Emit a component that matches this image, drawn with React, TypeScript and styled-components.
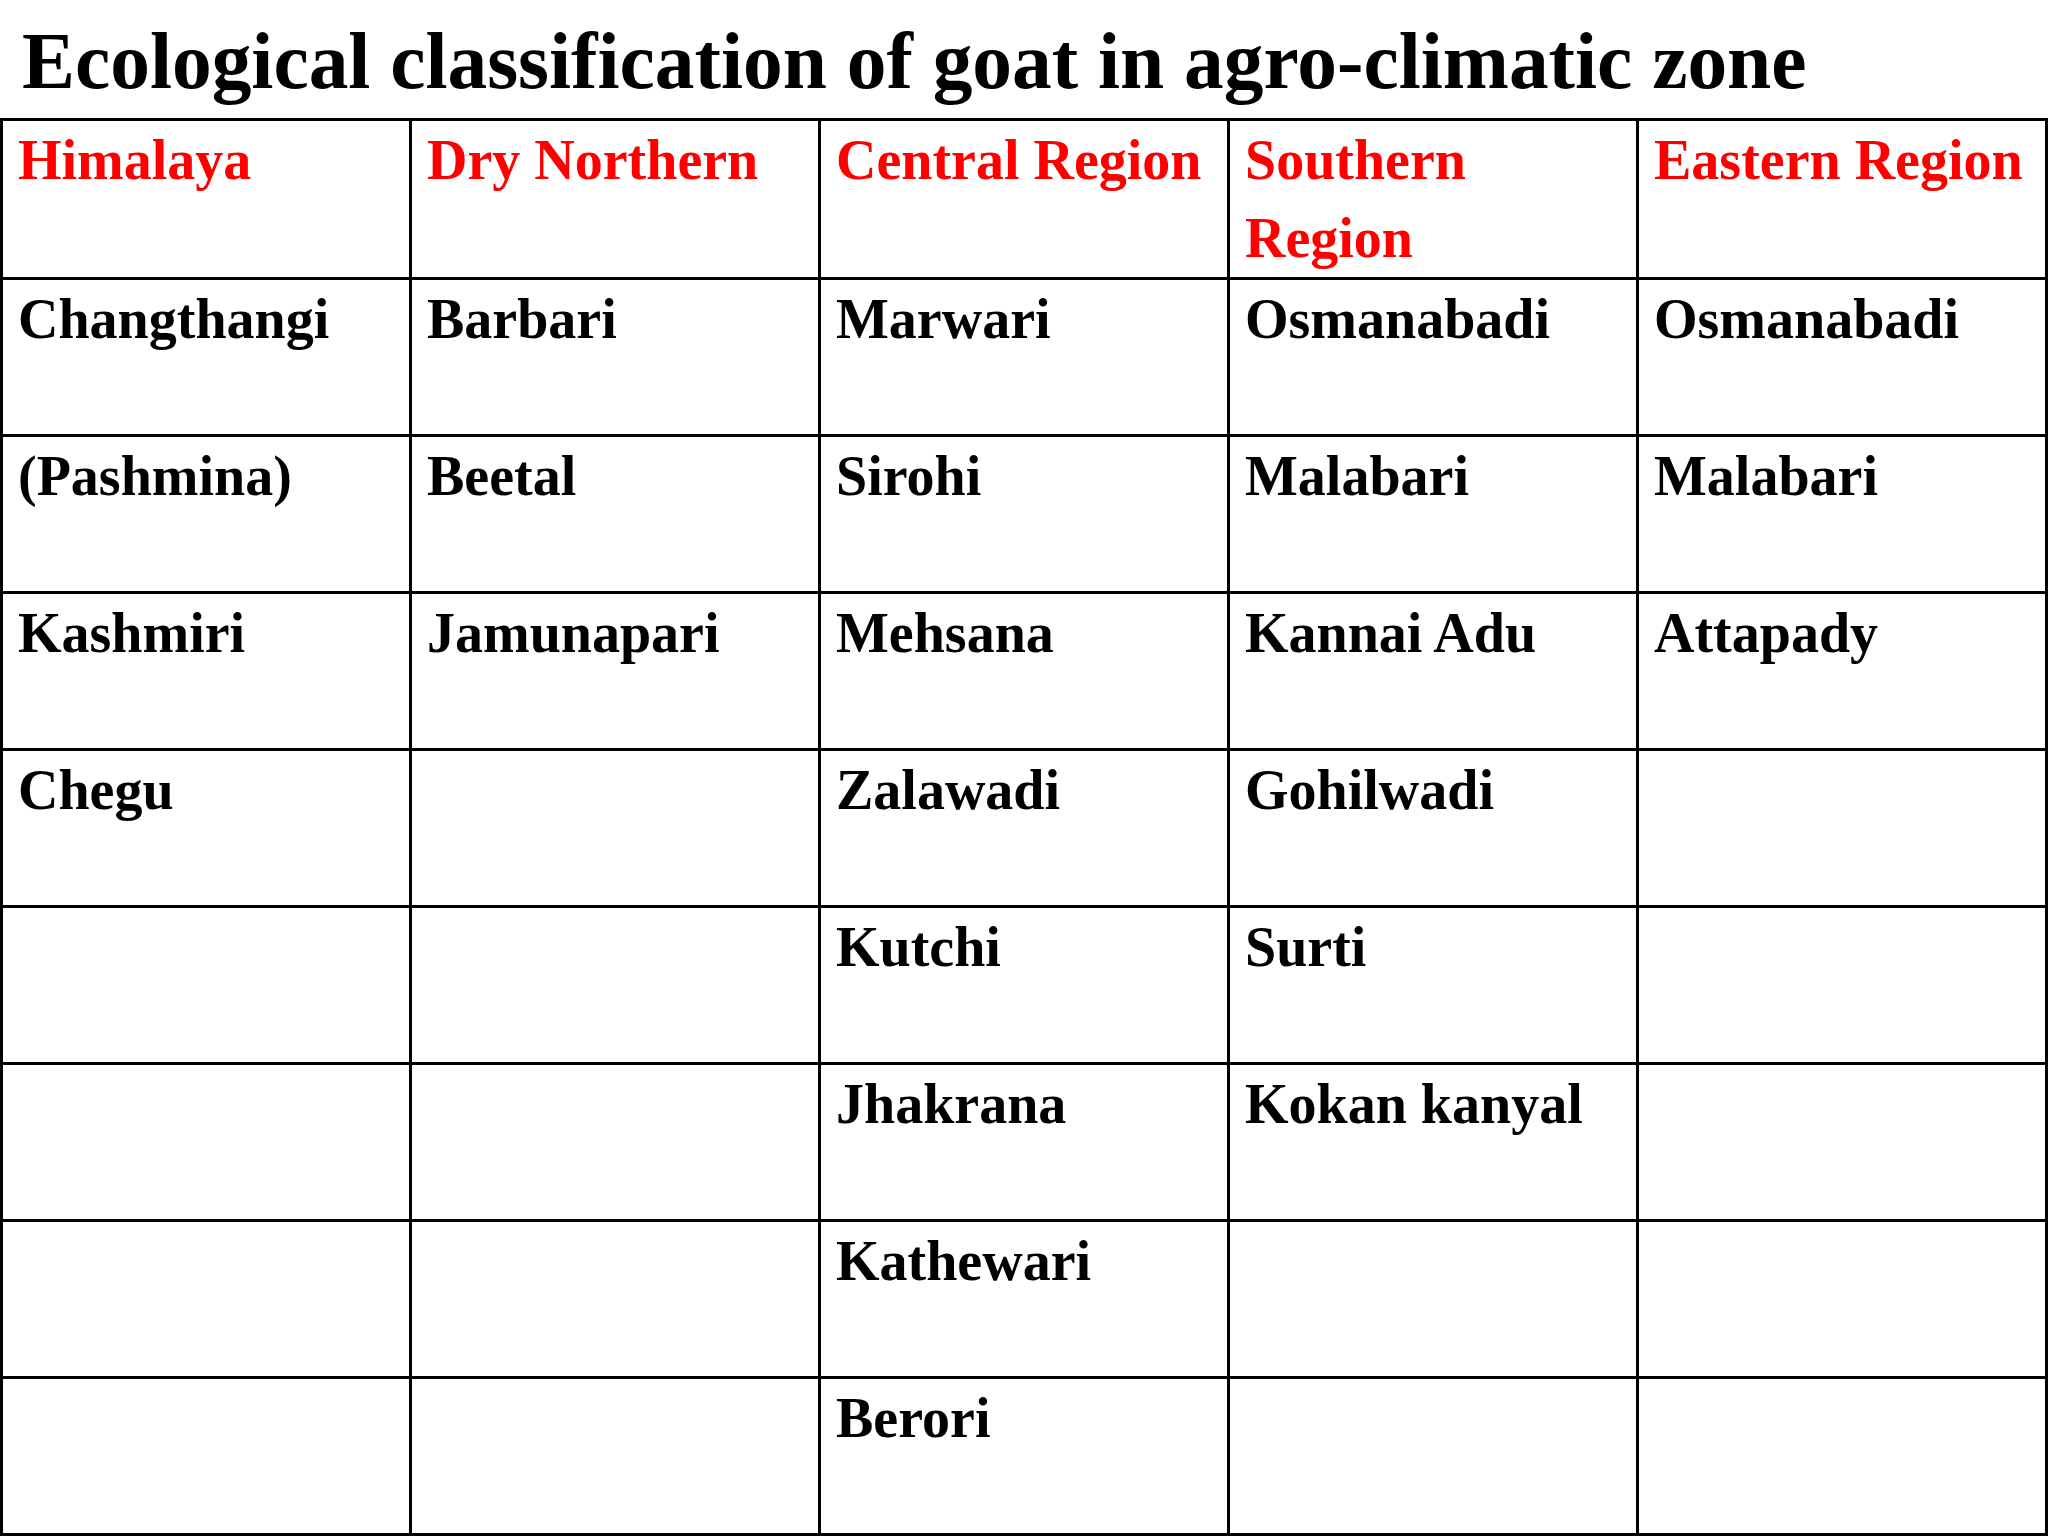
import React from "react";
import styled, { createGlobalStyle } from "styled-components";

const GlobalStyle = createGlobalStyle`
  html, body {
    margin: 0;
    padding: 0;
    background: #ffffff;
  }
  body {
    font-family: "Liberation Serif", "Times New Roman", serif;
  }
`;

const Page = styled.div`
  width: 2048px;
  height: 1536px;
  display: flex;
  flex-direction: column;
  background: #ffffff;
  overflow: hidden;
`;

const Title = styled.h1`
  flex: 0 0 auto;
  margin: 0;
  height: 118px;
  box-sizing: border-box;
  padding: 21px 0 0 22px;
  font-family: "Liberation Serif", "Times New Roman", serif;
  font-weight: 700;
  font-size: 79.4px;
  line-height: 80px;
  color: #000000;
  white-space: nowrap;
`;

const Table = styled.table`
  flex: 0 0 auto;
  width: 2048px;
  table-layout: fixed;
  border-collapse: collapse;
`;

const Row = styled.tr`
  height: 157px;
`;

const Cell = styled.td<{ $head?: boolean }>`
  border: 3px solid #000000;
  padding: 0 10px 0 15px;
  vertical-align: top;
  font-family: "Liberation Serif", "Times New Roman", serif;
  font-weight: 700;
  font-size: 56px;
  line-height: 78px;
  color: ${(p) => (p.$head ? "#ff0000" : "#000000")};
`;

const headers = [
  "Himalaya",
  "Dry Northern",
  "Central Region",
  "Southern Region",
  "Eastern Region",
];

const rows: string[][] = [
  ["Changthangi", "Barbari", "Marwari", "Osmanabadi", "Osmanabadi"],
  ["(Pashmina)", "Beetal", "Sirohi", "Malabari", "Malabari"],
  ["Kashmiri", "Jamunapari", "Mehsana", "Kannai Adu", "Attapady"],
  ["Chegu", "", "Zalawadi", "Gohilwadi", ""],
  ["", "", "Kutchi", "Surti", ""],
  ["", "", "Jhakrana", "Kokan kanyal", ""],
  ["", "", "Kathewari", "", ""],
  ["", "", "Berori", "", ""],
];

export default function App() {
  return (
    <>
      <GlobalStyle />
      <Page>
        <Title>Ecological classification of goat in agro-climatic zone</Title>
        <Table>
          <tbody>
            <Row>
              {headers.map((h) => (
                <Cell key={h} $head>
                  {h}
                </Cell>
              ))}
            </Row>
            {rows.map((r, i) => (
              <Row key={i}>
                {r.map((c, j) => (
                  <Cell key={j}>{c}</Cell>
                ))}
              </Row>
            ))}
          </tbody>
        </Table>
      </Page>
    </>
  );
}
